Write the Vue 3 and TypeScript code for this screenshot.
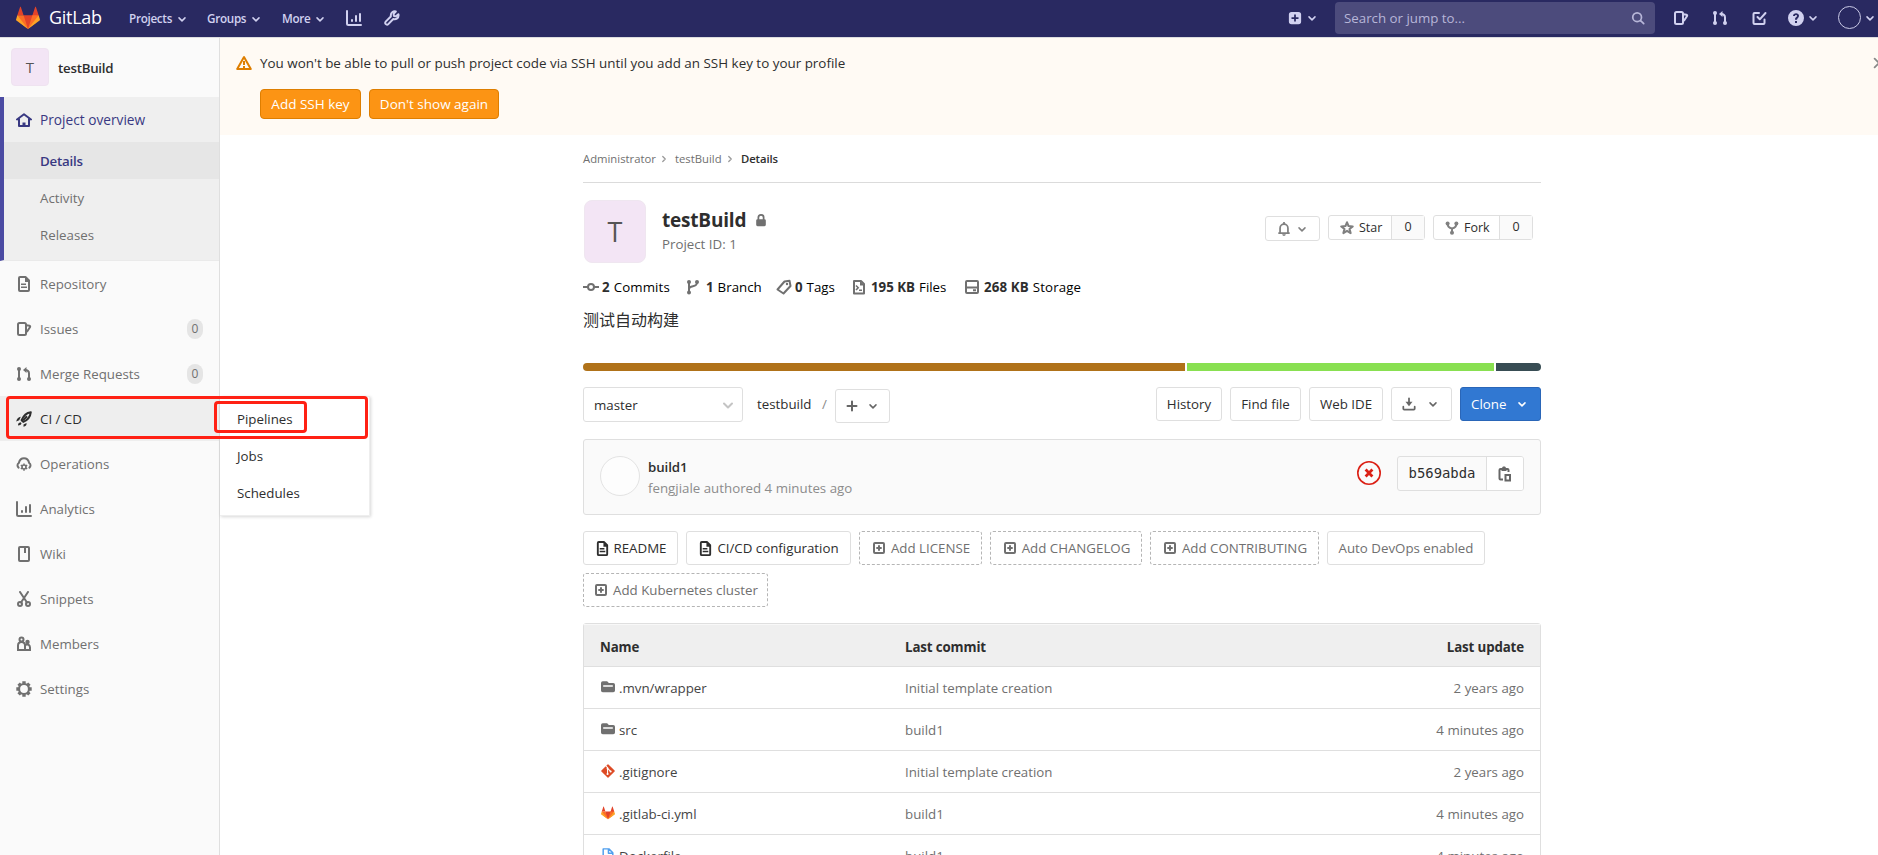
<script setup lang="ts">
import { h } from 'vue'

const S = 'fill="none" stroke="currentColor" stroke-width="2"'
const tanuki =
  '<g transform="scale(.4444)"><path fill="#e24329" d="M2 14l9.38 9v-9l-4-12.28c-.205-.632-1.176-.632-1.38 0zM34 14l-9.38 9v-9l4-12.28c.205-.632 1.176-.632 1.38 0zM18 34.38L3 14h30z"/><path fill="#fc6d26" d="M18 34.38L11.38 14H2l4 11zM18 34.38L24.62 14H34l-4 11z"/><path fill="#fca326" d="M2 14L.1 20.16c-.18.565 0 1.2.5 1.56L18 34.38zM34 14l1.9 6.16c.18.565 0 1.2-.5 1.56L18 34.38z"/></g>'

const icons: Record<string, string> = {
  tanuki,
  chevron: `<path ${S} stroke-linecap="round" stroke-linejoin="round" d="M4 6.5l4 4 4-4"/>`,
  angle: `<path ${S} stroke-linecap="round" stroke-linejoin="round" d="M6 4l4 4-4 4"/>`,
  chart: `<path ${S} stroke-linecap="round" d="M1 1v12.5a1.5 1.5 0 0 0 1.500 1.500H15M6 10v1M10 6v5M14 4v7"/>`,
  wrench: `<path ${S} stroke-linejoin="round" d="M14.400 4.200L12 6.300 9.900 5.900 9.600 3.900 11.800 1.500C9.500.8 6.800 2.300 6.800 5.200v1.300L1.700 11.600a1.700 1.700 0 0 0 2.600 2.500L9.300 9c2.500.9 6-1 5.100-4.800z"/>`,
  home: `<path ${S} stroke-linejoin="round" stroke-linecap="round" d="M1 7.500L8 2.200l7 5.300M3 7v7h10V7"/><path d="M6.500 14v-3.500h3V14z"/>`,
  doc: `<path ${S} stroke-linejoin="round" d="M3 2a1 1 0 0 1 1-1h5.500L13 4.500V14a1 1 0 0 1-1 1H4a1 1 0 0 1-1-1z"/><path d="M9 1v5h5zM5 7.500h5v1.600H5zM5 10.500h6v1.600H5z"/>`,
  issues: `<rect x="2" y="2" width="8" height="12" rx="1.500" ${S}/><path ${S} stroke-linejoin="round" d="M10.500 4.200l3 .6c.6.200.8.7.6 1.200l-3.300 5"/>`,
  merge: `<path ${S} d="M3 3v10M13 13V7.500C13 5 12 4 9 4"/><circle cx="3" cy="3" r="2"/><circle cx="3" cy="13" r="2"/><circle cx="13" cy="13" r="2"/><path d="M10.500 1v6L7 4z"/>`,
  rocket: `<path ${S} stroke-linejoin="round" d="M14.800 1.200C10.500 1.700 7.500 4.500 5.600 9.200l1.700 1.700c4.200-1.700 7-5 7.500-9.700z"/><path ${S} stroke-width="1.400" d="M7 9.300l4-4"/><path d="M4.800 5.700C2.300 6 .7 7.700.2 10.500l3-1.200zM7.500 13.500l3-1.500c.5 1.800-.8 3.300-3 3.800zM4.500 11.300c-1.800.3-2.500 1.500-2.500 3.200 1.700 0 3.200-.5 3.500-2.200z"/>`,
  cloud: `<path ${S} stroke-linecap="round" d="M2.600 11.600A2.800 2.800 0 0 1 2.800 7C3.500 4.300 5.500 2.300 8 2.300S12.500 4.300 13.200 7a2.800 2.800 0 0 1 .2 4.600"/><circle cx="8" cy="11" r="2" fill="none" stroke="currentColor" stroke-width="1.600"/><path stroke="currentColor" stroke-width="1.500" d="M8 7.500v1.300M8 13.200v1.500M4.800 9.100l1.300.8M9.900 12.100l1.300.8M4.800 12.900l1.300-.8M9.900 9.900l1.300-.8"/>`,
  book: `<rect x="3" y="1" width="10" height="14" rx="1" ${S}/><path d="M8 1h2v6H8z"/>`,
  scissors: `<circle cx="4" cy="13" r="2" ${S}/><circle cx="12" cy="13" r="2" ${S}/><path ${S} stroke-linecap="round" d="M4 1l7 10.500M12 1L5 11.500"/>`,
  members: `<circle cx="5.500" cy="3.500" r="2" ${S}/><path ${S} d="M2 14V9.500C2 7.500 3.500 6 5.500 6S9 7.500 9 9.500V14zM9.500 9c2.500-1.500 4.500.2 4.500 2.500V14H9"/><circle cx="11.500" cy="6" r="2.200"/>`,
  gear: `<circle cx="8" cy="8" r="5" fill="none" stroke="currentColor" stroke-width="2.200"/><path fill="none" stroke="currentColor" stroke-width="3.400" d="M8 .3v2.500M8 13.200v2.500M.3 8h2.500M13.200 8h2.500M2.600 2.600l1.700 1.700M11.700 11.700l1.700 1.700M2.600 13.400l1.700-1.700M11.700 4.300l1.700-1.700"/>`,
  plusSolid: `<path fill-rule="evenodd" d="M4 1h8a3 3 0 0 1 3 3v8a3 3 0 0 1-3 3H4a3 3 0 0 1-3-3V4a3 3 0 0 1 3-3zm3 3v3H4v2h3v3h2V9h3V7H9V4z"/>`,
  plusBox: `<rect x="3" y="3" width="10" height="10" rx="1" ${S}/><path ${S} d="M8 5.300v5.400M5.300 8h5.400"/>`,
  plus: `<path ${S} stroke-linecap="round" d="M8 3.500v9M3.500 8h9"/>`,
  search: `<circle cx="7" cy="7" r="5" ${S}/><path ${S} stroke-linecap="round" d="M11 11l3.500 3.500"/>`,
  todo: `<path ${S} stroke-linecap="round" stroke-linejoin="round" d="M8 3H3.500A1 1 0 0 0 2.500 4v9a1 1 0 0 0 1 1h9a1 1 0 0 0 1-1V9.500M6.500 7l2.300 2.300L14.500 3"/>`,
  help: `<path fill-rule="evenodd" d="M8 0a8 8 0 1 1 0 16A8 8 0 0 1 8 0zM7 11v2h2v-2zM5 6h2c0-1.300 2-1.300 2 0 0 1-2 1.200-2 3v.8h2c0-1.800 2-1.800 2-4C11 2.300 5 2.300 5 6z"/>`,
  warn: `<path ${S} stroke-linejoin="round" d="M8 2L1.200 14h13.600z"/><path d="M7 6h2v4H7zM7 11h2v2H7z"/>`,
  close: `<path ${S} stroke-linecap="round" d="M3 3l10 10M13 3L3 13"/>`,
  lock: `<path fill-rule="evenodd" d="M4 7V5a4 4 0 1 1 8 0v2a1.500 1.500 0 0 1 1.500 1.500v5A1.500 1.500 0 0 1 12 15H4a1.500 1.500 0 0 1-1.500-1.500v-5A1.500 1.500 0 0 1 4 7zm2 0h4V5a2 2 0 1 0-4 0z"/>`,
  commit: `<circle cx="8" cy="8" r="3" ${S}/><path ${S} d="M0 8h5M11 8h5"/>`,
  branch: `<path ${S} d="M4 3v10M4 10c0-2 1.500-2.500 4-2.800C11 6.800 12 6 12 3"/><circle cx="4" cy="3" r="2"/><circle cx="12" cy="3" r="2"/><circle cx="4" cy="13.500" r="2"/>`,
  tag: `<path ${S} stroke-linejoin="round" d="M1.500 10.500L8.500 2.500 13.500 1.800 14.500 7 7.500 14.500z"/><circle cx="11" cy="5" r="1.200"/>`,
  code: `<path ${S} stroke-linejoin="round" d="M3 2h7L13 5v9.500H3z"/><path d="M9 2v4.500h4.500z"/><path fill="none" stroke="currentColor" stroke-width="1.600" d="M5 6.500l2.200 2.200L5 11M8 11.300h3"/>`,
  disk: `<rect x="2" y="2" width="12" height="12" rx="1" ${S}/><path ${S} d="M2 8.500h12M9 11.300h3"/>`,
  bell: `<path ${S} stroke-linejoin="round" d="M3.500 12.500V7a4.500 4.500 0 0 1 9 0v5.500M1.500 12.800h13"/><path d="M7 0h2v3H7zM6 14h4c0 2.600-4 2.600-4 0z"/>`,
  star: `<path fill="none" stroke="currentColor" stroke-width="2.400" stroke-linejoin="round" d="M8 1.500l1.800 4.300 4.700.4-3.600 3 1.200 4.600L8 11.300l-4.100 2.500 1.200-4.600-3.600-3 4.700-.4z"/>`,
  fork: `<path fill="none" stroke="currentColor" stroke-width="2.300" d="M3 3c0 3 1 4.500 5 5.500 4-1 5-2.500 5-5.500M8 8v6"/><circle cx="3" cy="2.800" r="2.300"/><circle cx="13" cy="2.800" r="2.300"/><circle cx="8" cy="13.500" r="2.300"/>`,
  download: `<path ${S} stroke-linecap="round" stroke-linejoin="round" d="M1.500 11v2.500a1 1 0 0 0 1 1h11a1 1 0 0 0 1-1V11M8 1.500V8"/><path d="M4 5.500h8L8 10.500z"/>`,
  paste: `<path ${S} stroke-linejoin="round" d="M6 13.500H3.500a1 1 0 0 1-1-1V4a1 1 0 0 1 1-1h7a1 1 0 0 1 1 1v2"/><path d="M4.500 5V2.500L6 .5h2l1.500 2V5z"/><rect x="8.500" y="9" width="4.500" height="5.500" ${S}/>`,
  folder: `<path fill-rule="evenodd" d="M2 1.500h5l2 2h5a2 2 0 0 1 2 2V12a2 2 0 0 1-2 2H2a2 2 0 0 1-2-2V3.500a2 2 0 0 1 2-2zM2.500 6v1.800h11V6z"/>`,
  git: `<path fill="#dd4b25" stroke="#dd4b25" stroke-width="1.500" stroke-linejoin="round" d="M8 1l7 7-7 7-7-7z"/><path stroke="#fff" stroke-width="1.200" fill="none" d="M5.500 2l2 2.300v7.500M7.500 5l3.500 3.500"/><circle cx="7.500" cy="5" r="1.100" fill="#fff"/><circle cx="11" cy="8.500" r="1.200" fill="#fff"/><circle cx="7.500" cy="11.500" r="1.200" fill="#fff"/>`,
  blue: `<path fill="none" stroke="#4f9fee" stroke-width="1.700" stroke-linejoin="round" d="M2.500 1H9l4.500 4.500V15h-11zM8.500 1v5h5"/>`,
  failed: `<circle cx="12" cy="12" r="11.200" fill="none" stroke="#db1f14" stroke-width="1.600"/><path fill="none" stroke="#db1f14" stroke-width="2.800" d="M8.600 8.600l6.800 6.800M15.400 8.600l-6.800 6.800"/>`,
}

const Icon = (p: { name: string }) =>
  h('svg', {
    viewBox: p.name === 'failed' ? '0 0 24 24' : '0 0 16 16',
    fill: 'currentColor',
    innerHTML: icons[p.name],
  })
Icon.props = ['name']

const menus = ['Projects', 'Groups', 'More']
const nav: { icon: string; label: string; count?: number; active?: boolean }[] = [
  { icon: 'doc', label: 'Repository' },
  { icon: 'issues', label: 'Issues', count: 0 },
  { icon: 'merge', label: 'Merge Requests', count: 0 },
  { icon: 'rocket', label: 'CI / CD', active: true },
  { icon: 'cloud', label: 'Operations' },
  { icon: 'chart', label: 'Analytics' },
  { icon: 'book', label: 'Wiki' },
  { icon: 'scissors', label: 'Snippets' },
  { icon: 'members', label: 'Members' },
  { icon: 'gear', label: 'Settings' },
]
const stats = [
  { icon: 'commit', value: '2', label: 'Commits', cls: 's-commits' },
  { icon: 'branch', value: '1', label: 'Branch', cls: 's-branch' },
  { icon: 'tag', value: '0', label: 'Tags', cls: 's-tags' },
  { icon: 'code', value: '195 KB', label: 'Files', cls: 's-files' },
  { icon: 'disk', value: '268 KB', label: 'Storage', cls: 's-storage' },
]
const languages = [
  { share: 602, color: '#b07219' },
  { share: 307, color: '#89e051' },
  { share: 45, color: '#384d54' },
]
const quick = [
  { icon: 'doc', label: 'README', kind: 'solid', width: 95 },
  { icon: 'doc', label: 'CI/CD configuration', kind: 'solid', width: 165 },
  { icon: 'plusBox', label: 'Add LICENSE', kind: 'dashed', width: 123 },
  { icon: 'plusBox', label: 'Add CHANGELOG', kind: 'dashed', width: 152 },
  { icon: 'plusBox', label: 'Add CONTRIBUTING', kind: 'dashed', width: 169 },
  { icon: '', label: 'Auto DevOps enabled', kind: 'muted', width: 158 },
  { icon: 'plusBox', label: 'Add Kubernetes cluster', kind: 'dashed', width: 185 },
]
const files = [
  { icon: 'folder', name: '.mvn/wrapper', commit: 'Initial template creation', when: '2 years ago' },
  { icon: 'folder', name: 'src', commit: 'build1', when: '4 minutes ago' },
  { icon: 'git', name: '.gitignore', commit: 'Initial template creation', when: '2 years ago' },
  { icon: 'tanuki', name: '.gitlab-ci.yml', commit: 'build1', when: '4 minutes ago' },
  { icon: 'blue', name: 'Dockerfile', commit: 'build1', when: '4 minutes ago' },
]
</script>

<template>
  <div class="page">
    <header class="top">
      <Icon name="tanuki" class="logo" />
      <span class="brand">GitLab</span>
      <nav class="menus">
        <span v-for="m in menus" :key="m" class="menu" :class="'m-' + m.toLowerCase()">{{ m }}<Icon name="chevron" class="i12" /></span>
      </nav>
      <Icon name="chart" class="i16 top-chart" />
      <Icon name="wrench" class="i16 top-wrench" />
      <div class="top-right">
        <Icon name="plusSolid" class="i14" />
        <Icon name="chevron" class="i12 gap-new" />
        <div class="search"><span>Search or jump to...</span><Icon name="search" class="i14" /></div>
        <Icon name="issues" class="i16 t-issues" />
        <Icon name="merge" class="i16 t-merge" />
        <Icon name="todo" class="i16 t-todo" />
        <Icon name="help" class="i16 t-help" />
        <Icon name="chevron" class="i12 t-help-chev" />
        <span class="me"></span>
        <Icon name="chevron" class="i12 t-me-chev" />
      </div>
    </header>

    <div class="body">
      <aside class="side">
        <div class="ctx"><span class="ava-s">T</span><b>testBuild</b></div>
        <div class="overview">
          <div class="row ov"><Icon name="home" class="i16" /><span>Project overview</span></div>
          <div class="sub on">Details</div>
          <div class="sub">Activity</div>
          <div class="sub">Releases</div>
        </div>
        <div v-for="n in nav" :key="n.label" class="row" :class="{ active: n.active }">
          <Icon :name="n.icon" class="i16" /><span>{{ n.label }}</span>
          <i v-if="n.count !== undefined" class="badge">{{ n.count }}</i>
          <div v-if="n.active" class="fly">
            <div>Pipelines</div>
            <div>Jobs</div>
            <div>Schedules</div>
          </div>
        </div>
      </aside>

      <main class="main">
        <section class="alert">
          <Icon name="warn" class="i16 warn" />
          <div class="alert-body">
            <p>You won't be able to pull or push project code via SSH until you add an SSH key to your profile</p>
            <div class="alert-btns"><span class="ob ob1">Add SSH key</span><span class="ob ob2">Don't show again</span></div>
          </div>
          <Icon name="close" class="close" />
        </section>

        <div class="wrap">
          <div class="crumbs">
            <span class="c1">Administrator</span><Icon name="angle" class="i10" />
            <span class="c2">testBuild</span><Icon name="angle" class="i10" />
            <b>Details</b>
          </div>

          <div class="head">
            <span class="ava-l">T</span>
            <div class="title">
              <h1>testBuild<Icon name="lock" class="lock" /></h1>
              <p>Project ID: 1</p>
            </div>
            <div class="acts">
              <span class="ab bell"><Icon name="bell" class="i14" /><Icon name="chevron" class="i12" /></span>
              <span class="ab star"><span class="l"><Icon name="star" class="i14" />Star</span><span class="n">0</span></span>
              <span class="ab fork"><span class="l"><Icon name="fork" class="i14" />Fork</span><span class="n">0</span></span>
            </div>
          </div>

          <div class="stats">
            <span v-for="s in stats" :key="s.label" class="stat" :class="s.cls"><Icon :name="s.icon" class="i16" /><b>{{ s.value }}</b><span>{{ s.label }}</span></span>
          </div>
          <p class="desc">测试自动构建</p>

          <div class="langs">
            <span v-for="l in languages" :key="l.color" :style="{ flexGrow: l.share, background: l.color }"></span>
          </div>

          <div class="tools">
            <span class="select">master<Icon name="chevron" class="i16" /></span>
            <span class="path">testbuild</span><span class="slash">/</span>
            <span class="btn add"><Icon name="plus" class="i16" /><Icon name="chevron" class="i12" /></span>
            <div class="tools-r">
              <span class="btn w66">History</span>
              <span class="btn w71">Find file</span>
              <span class="btn w74">Web IDE</span>
              <span class="btn dl"><Icon name="download" class="i14" /><Icon name="chevron" class="i12" /></span>
              <span class="btn clone">Clone<Icon name="chevron" class="i12" /></span>
            </div>
          </div>

          <div class="commit">
            <span class="face"></span>
            <div class="who"><b>build1</b><span>fengjiale authored 4 minutes ago</span></div>
            <Icon name="failed" class="failed" />
            <span class="sha"><code>b569abda</code><span><Icon name="paste" class="i16" /></span></span>
          </div>

          <div class="quick">
            <span v-for="q in quick" :key="q.label" class="q" :class="q.kind" :style="{ width: q.width + 'px' }"><Icon v-if="q.icon" :name="q.icon" class="i16" :class="{ file: q.icon === 'doc' }" /><span>{{ q.label }}</span></span>
          </div>

          <div class="table">
            <div class="tr th"><span>Name</span><span>Last commit</span><span>Last update</span></div>
            <div v-for="f in files" :key="f.name" class="tr">
              <span class="fname"><Icon :name="f.icon" class="i14" />{{ f.name }}</span>
              <span>{{ f.commit }}</span><span>{{ f.when }}</span>
            </div>
          </div>
        </div>
      </main>
    </div>

    <div class="mark mark-row"></div>
    <div class="mark mark-item"></div>
  </div>
</template>

<style>
body { margin: 0; overflow: hidden; }
</style>

<style scoped>
* { box-sizing: border-box; }
p, h1 { margin: 0; }
svg { flex: none; display: block; }
.page { position: relative; width: 1878px; height: 855px; overflow: hidden; background: #fff; color: #2e2e2e; font: 13.3px/20px "Open Sans", "Noto Sans", "Noto Sans CJK SC", sans-serif; white-space: nowrap; }
.i16 { width: 16px; height: 16px; }
.i14 { width: 14px; height: 14px; }
.i12 { width: 12px; height: 12px; }
.i10 { width: 10px; height: 10px; color: #999; }

.top { display: flex; align-items: center; height: 37px; background: #292961; color: #d1d1f0; padding: 0 2px 2px 16px; }
.logo { width: 24px; height: 24px; }
.brand { color: #fff; font-size: 18px; margin-left: 9px; width: 53px; letter-spacing: -0.3px; position: relative; top: -1px; }
.menus { display: flex; margin-left: 27px; }
.menu { display: flex; align-items: center; justify-content: space-between; font-size: 11.700px; font-weight: 600; letter-spacing: -0.3px; }
.menu svg { position: relative; top: 1px; }
.m-projects { width: 59px; margin-right: 19px; }
.m-groups { width: 55px; margin-right: 20px; }
.m-more { width: 44px; }
.top-chart { margin-left: 20px; }
.top-wrench { margin-left: 22px; }
.top-right { display: flex; align-items: center; margin-left: auto; }
.gap-new { margin-left: 4px; margin-right: 17px; }
.search { display: flex; align-items: center; justify-content: space-between; width: 320px; height: 32px; background: #4c4b7c; border-radius: 4px; padding: 0 10px 0 9px; color: #b7b6d8; }
.t-issues { margin-left: 18px; }
.t-merge { margin-left: 23px; }
.t-todo { margin-left: 23px; }
.t-help { margin-left: 21px; }
.t-help-chev { margin-left: 3px; margin-right: 19px; }
.me { width: 23px; height: 23px; border: 1px solid #c9c9e6; border-radius: 50%; }
.t-me-chev { margin-left: 3px; }

.body { display: flex; height: 818px; border-top: 1px solid #dcdcdf; }
.side { width: 220px; background: #fafafa; border-right: 1px solid #dfdfdf; flex: none; color: #707070; }
.ctx { display: flex; align-items: center; height: 59px; padding: 0 0 2px 11px; gap: 9px; color: #2e2e2e; }
.ctx b { font-weight: 600; letter-spacing: -0.25px; padding-top: 2px; }
.ava-s { width: 38px; height: 38px; border-radius: 4px; background: #f3e5f5; border: 1px solid #efe3f0; text-align: center; line-height: 37px; font-size: 15px; color: #555; }
.overview { height: 164px; background: #efefef; border-left: 4px solid #4b4ba3; border-bottom: 1px solid #eaeaea; }
.row { position: relative; display: flex; align-items: center; height: 45px; padding-left: 16px; }
.row > svg + span { margin-left: 8px; padding-top: 1px; }
.row.active { background: #eee; color: #2e2e2e; }
.row.ov { padding-left: 12px; color: #393982; font-size: 13.700px; }
.sub { height: 37px; line-height: 38px; padding-left: 36px; }
.sub.on { background: #e6e6e6; color: #393982; font-weight: 600; letter-spacing: -0.2px; }
.badge { margin-left: auto; margin-right: 16px; width: 16px; height: 20px; border-radius: 8px; background: #e5e5e5; font-style: normal; font-size: 12px; line-height: 20px; text-align: center; }
.fly { position: absolute; left: 220px; top: 0; width: 150px; height: 120px; padding: 4px 0 0 17px; background: #fff; border: 1px solid #eee; border-left: 0; box-shadow: 1px 1px 3px rgba(0, 0, 0, .16); z-index: 2; color: #2e2e2e; }
.fly div { height: 37px; line-height: 37px; }

.main { flex: 1; min-width: 0; }
.alert { position: relative; display: flex; height: 97px; background: #fffaf4; padding: 15px 0 0 16px; }
.warn { color: #de7e00; margin-top: 2px; }
.alert-body { margin-left: 8px; }
.alert-body p { height: 36px; line-height: 21px; font-size: 13.410px; }
.alert-btns { display: flex; gap: 8px; }
.ob { height: 30px; border: 1px solid #de7e00; border-radius: 4px; background: #fc9414; color: #fff; line-height: 28px; text-align: center; font-size: 13.500px; }
.ob1 { width: 101px; }
.ob2 { width: 130px; }
.close { position: absolute; right: -8px; top: 18px; width: 14px; height: 14px; color: #888; }

.wrap { width: 958px; margin-left: 363px; }
.crumbs { display: flex; align-items: center; height: 48px; padding-top: 1px; border-bottom: 1px solid #dbdbdb; font-size: 11.300px; color: #707070; }
.crumbs svg { margin-right: 6px; }
.crumbs b { font-weight: 600; color: #2e2e2e; letter-spacing: -0.1px; }
.c1 { width: 76px; }
.c2 { width: 50px; }
.head { display: flex; height: 80px; padding: 17px 0 0 1px; }
.ava-l { width: 62px; height: 63px; border-radius: 8px; background: #f3e5f5; border: 1px solid #efe6f0; text-align: center; font-size: 27px; line-height: 62px; color: #555; }
.title { margin-left: 16px; }
.title h1 { display: flex; align-items: center; font-size: 19px; line-height: 26px; font-weight: 700; letter-spacing: -0.2px; padding-top: 7px; }
.title p { color: #707070; padding-top: 1px; }
.lock { width: 14px; height: 14px; color: #707070; margin-left: 8px; }
.acts { display: flex; gap: 8px; margin-left: auto; margin-right: 8px; padding-top: 15px; }
.ab { display: flex; height: 25px; border: 1px solid #dfdfdf; border-radius: 3px; font-size: 12.500px; color: #2e2e2e; }
.ab svg { color: #808080; }
.bell { width: 55px; margin-top: 1px; align-items: center; justify-content: space-between; padding: 0 11px; }
.star { width: 97px; }
.fork { width: 100px; }
.l { flex: 1; display: flex; align-items: center; gap: 5px; padding-left: 11px; padding-top: 1px; }
.n { width: 33px; background: #fafafa; border-left: 1px solid #dfdfdf; text-align: center; line-height: 22px; }

.stats { display: flex; height: 42px; align-items: center; margin-top: 3px; color: #000; }
.stat { display: flex; align-items: center; }
.stat svg { color: #707070; }
.stat b { font-weight: 700; margin: 0 4px 0 3px; color: #2e2e2e; }
.s-commits { width: 102px; letter-spacing: 0.1px; }
.s-branch { width: 91px; }
.s-branch b { margin-left: 5px; }
.s-tags { width: 75px; }
.s-files { width: 113px; }
.s-files b { margin-left: 4px; }
.s-storage { letter-spacing: 0.12px; }
.s-storage b { margin-left: 4px; }
.desc { font-size: 16px; height: 55px; line-height: 24px; }
.langs { display: flex; gap: 2px; height: 8px; border-radius: 4px; overflow: hidden; }

.tools { display: flex; margin-top: 16px; height: 52px; align-items: flex-start; }
.select { display: flex; align-items: center; justify-content: space-between; width: 160px; height: 35px; border: 1px solid #dfdfdf; border-radius: 3px; padding: 0 6px 0 10px; }
.select svg { color: #c4c4c4; }
.path { margin-left: 14px; width: 65px; line-height: 35px; }
.slash { width: 13px; line-height: 35px; color: #8a8a8a; }
.btn { height: 34px; line-height: 33px; border: 1px solid #dfdfdf; border-radius: 3px; text-align: center; background: #fff; }
.btn svg { color: #666; }
.add { display: flex; align-items: center; justify-content: space-between; width: 55px; margin-top: 2px; padding: 0 10px 0 8px; }
.tools-r { display: flex; gap: 8px; margin-left: auto; }
.w66 { width: 66px; }
.w71 { width: 71px; }
.w74 { width: 74px; }
.dl { display: flex; align-items: center; justify-content: space-between; width: 61px; padding: 0 12px 0 10px; }
.clone { display: flex; align-items: center; justify-content: space-between; width: 81px; padding: 0 12px 0 10px; background: #3178d2; border-color: #2a66b8; color: #fff; }
.clone svg { color: #fff; }

.commit { display: flex; height: 76px; border: 1px solid #dfdfdf; border-radius: 3px; background: #fafafa; padding: 16px; }
.face { width: 40px; height: 40px; border: 1px solid #e3e3e3; border-radius: 50%; background: #fdfdfd; }
.who { display: flex; flex-direction: column; margin-left: 8px; padding-top: 1px; line-height: 21px; color: #8c8c8c; }
.who b { color: #2e2e2e; font-weight: 600; letter-spacing: -0.1px; }
.failed { width: 24px; height: 24px; margin: 5px 16px 0 auto; }
.sha { display: flex; width: 127px; height: 35px; border: 1px solid #dfdfdf; border-radius: 3px; overflow: hidden; }
.sha code { width: 88px; text-align: center; line-height: 33px; font-family: "DejaVu Sans Mono", monospace; font-size: 13.900px; }
.sha > span { display: flex; flex: 1; align-items: center; justify-content: center; border-left: 1px solid #dfdfdf; background: #fff; color: #666; }

.quick { display: flex; flex-wrap: wrap; gap: 8px; margin-top: 16px; }
.q { display: flex; align-items: center; justify-content: center; gap: 4px; height: 34px; border: 1px solid #dfdfdf; border-radius: 3px; }
.q .file { width: 15px; height: 15px; }
.q.dashed { border: 1px dashed #b5b5b5; color: #707070; }
.q.muted { color: #707070; }

.table { margin-top: 16px; border: 1px solid #dfdfdf; border-radius: 3px 3px 0 0; height: 260px; }
.tr { display: grid; grid-template-columns: 305px 1fr 200px; align-items: center; height: 42px; padding: 0 16px 0 16px; border-bottom: 1px solid #dfdfdf; color: #707070; }
.tr > :last-child { text-align: right; }
.th { height: 43px; background: #efefef; font-weight: 700; color: #2e2e2e; letter-spacing: -0.13px; padding-top: 2px; border-top: 1px solid #f8f8f8; }
.fname { display: flex; align-items: center; gap: 4px; color: #444; padding-left: 1px; }
.fname svg { color: #707070; position: relative; top: -1px; }

.mark { position: absolute; border: 3px solid #ff2114; border-radius: 4px; z-index: 5; }
.mark-row { left: 6px; top: 396px; width: 362px; height: 43px; }
.mark-item { left: 214px; top: 401px; width: 93px; height: 32px; }
</style>
